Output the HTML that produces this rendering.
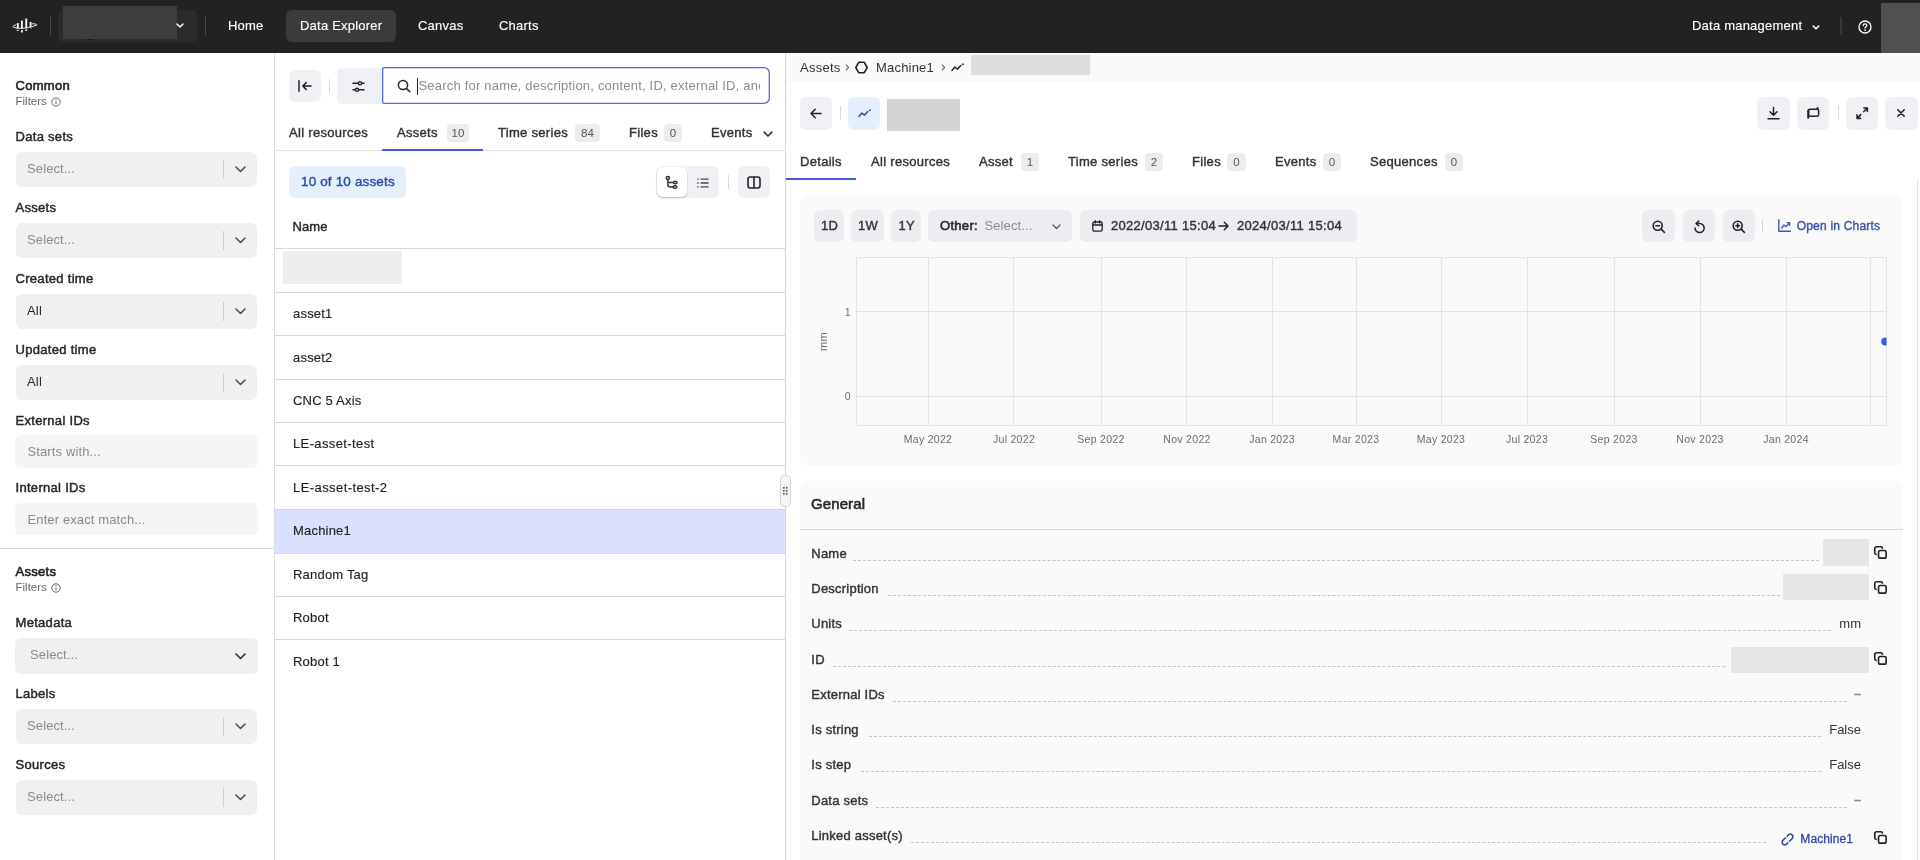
<!DOCTYPE html>
<html lang="en">
<head>
<meta charset="utf-8">
<title>Data Explorer</title>
<style>
*{box-sizing:border-box;margin:0;padding:0}
html,body{width:1920px;height:860px;overflow:hidden;background:#fff}
body{will-change:transform}
body{font-family:"Liberation Sans",Arial,sans-serif;color:#222;font-size:14px;position:relative;-webkit-font-smoothing:antialiased}
.abs{position:absolute}
.t{position:absolute;white-space:nowrap;line-height:20px;height:20px}
svg{position:absolute;overflow:visible}
/* NAV */
#nav{position:absolute;left:0;top:0;width:1920px;height:53px;background:#222}
#nav .t{color:#fff;font-size:13px;font-weight:400;-webkit-text-stroke:.15px #fff;top:16px;letter-spacing:.22px}
.vdiv{position:absolute;width:1px;background:#4a4a4a}
/* SIDEBAR */
#side{position:absolute;left:0;top:53px;width:275px;height:807px;background:#fff;border-right:1px solid #dcdcdc}
.lbl{position:absolute;left:15.5px;font-size:13px;font-weight:400;-webkit-text-stroke:.45px #262626;color:#262626;white-space:nowrap;line-height:20px;height:20px;letter-spacing:.3px}
.sub{position:absolute;left:15.5px;font-size:11.5px;color:#666;white-space:nowrap;line-height:16px;height:16px}
.sel{position:absolute;left:16px;width:241px;height:35px;background:#f0f0f0;border-radius:6px}
.sel .ph{position:absolute;left:11px;top:7px;font-size:13px;color:#8a8a8a;line-height:20px;letter-spacing:.12px}
.sel .val{position:absolute;left:11px;top:7px;font-size:13px;color:#262626;line-height:20px;letter-spacing:.2px}
.sel .dv{position:absolute;left:207px;top:8px;width:1px;height:19px;background:#cfcfcf}
.inp{position:absolute;left:15px;width:243px;height:33px;background:#f5f5f5;border-radius:6px}
.inp .ph{position:absolute;left:12.5px;top:7px;font-size:13px;color:#8a8a8a;line-height:20px;letter-spacing:.12px}
/* MID */
#mid{position:absolute;left:275px;top:53px;width:511px;height:807px;background:#fff;border-right:1px solid #d2d2d6}
.btn{position:absolute;background:#f0f1f5;border-radius:6px}
.tab{position:absolute;font-size:13px;font-weight:400;-webkit-text-stroke:.4px #333;color:#333;white-space:nowrap;line-height:20px;height:20px;letter-spacing:.3px}
.badge{position:absolute;height:18px;background:#ececec;border-radius:4px;font-size:11.5px;color:#555;text-align:center;line-height:18px;margin-top:1px}
.row{position:absolute;left:0;width:510px;border-top:1px solid #d9d9d9}
.row span{position:absolute;left:18px;font-size:13px;color:#1f1f1f;-webkit-text-stroke:.15px #1f1f1f;line-height:20px;white-space:nowrap;letter-spacing:.2px}
/* RIGHT */
#right{position:absolute;left:786px;top:53px;width:1134px;height:807px;background:#fff}
.card{position:absolute;left:14px;width:1103px;background:#fafafa;border-radius:8px}
.gbtn{position:absolute;background:#ededf1;border-radius:6px;height:32px;top:15px}
.gbtn .t{font-size:13px;font-weight:400;-webkit-text-stroke:.4px #333;color:#333;top:5.5px;letter-spacing:.3px}
.kv{position:absolute;left:11px;width:1080px;height:20px;margin-top:1px}
.kv .k{position:absolute;left:.3px;top:0;font-size:13px;font-weight:400;-webkit-text-stroke:.4px #333;color:#333;line-height:20px;white-space:nowrap;letter-spacing:.22px}
.kv .d{position:absolute;top:16px;height:0;border-top:1px dashed #c4c4c4}
.kv .v{position:absolute;right:30px;top:0;font-size:13px;color:#333;line-height:20px;white-space:nowrap;letter-spacing:0}
.red{position:absolute;background:#e6e6e6}
.ax{font-family:"Liberation Sans",Arial,sans-serif;font-size:10.5px;fill:#6b6b6b;letter-spacing:.3px}
</style>
</head>
<body>

<!-- ================= NAV ================= -->
<div id="nav">
  <svg style="left:0;top:0" width="50" height="53" viewBox="0 0 50 53" fill="none">
    <path d="M17.8 23.1v7.8M21.9 20.600v11.900M26.250 18.400v12.500M30.600 21.900v7.100" stroke="#f4f4f4" stroke-width="1.900"/>
    <path d="M12.900 28C15 29.800 26 30.800 36.800 26.200" stroke="#222" stroke-width="1.300"/>
    <path d="M15.800 24.900C13.800 25.400 12.600 26 12.900 26.800C15 28.600 26 29.600 36.800 25C37.200 24.300 35 23.700 32.400 23.800" stroke="#ededed" stroke-width="1" stroke-linecap="round"/>
  </svg>
  <div class="vdiv" style="left:50px;top:17px;height:18px"></div>
  <div class="abs" style="left:58px;top:10px;width:140px;height:32px;background:#2b2b2b;border-radius:6px"></div>
  <div class="abs" style="left:63px;top:6px;width:114px;height:33px;background:#3d3d3d"></div><div class="abs" style="left:87px;top:39px;width:7px;height:1px;background:#181818"></div>
  <svg style="left:176px;top:23px" width="8" height="6" viewBox="0 0 8 6" fill="none" stroke="#fff" stroke-width="1.5" stroke-linecap="round" stroke-linejoin="round"><path d="M1 1l3 3 3-3"/></svg>
  <div class="vdiv" style="left:205px;top:17px;height:18px"></div>
  <div class="t" style="left:228px">Home</div>
  <div class="abs" style="left:286px;top:10px;width:110px;height:32px;background:#3b3b3b;border-radius:6px"></div>
  <div class="t" style="left:300px">Data Explorer</div>
  <div class="t" style="left:418px">Canvas</div>
  <div class="t" style="left:499px">Charts</div>
  <div class="t" style="left:1692px">Data management</div>
  <svg style="left:1812px;top:24.8px" width="8" height="6" viewBox="0 0 8 6" fill="none" stroke="#fff" stroke-width="1.6" stroke-linecap="round" stroke-linejoin="round"><path d="M1.200 1l2.800 2.800L6.800 1"/></svg>
  <div class="vdiv" style="left:1840px;top:17px;height:18px;width:2px;background:#383838"></div>
  <svg style="left:1857.700px;top:19.600px" width="14" height="14" viewBox="0 0 14 14" fill="none" stroke="#fff" stroke-width="1.3" stroke-linecap="round"><circle cx="7" cy="7" r="6"/><path d="M5.2 5.6c0-1 .8-1.7 1.8-1.7s1.8.7 1.8 1.6c0 1.3-1.8 1.4-1.8 2.7"/><circle cx="7" cy="10.2" r=".5" fill="#fff" stroke-width=".6"/></svg>
  <div class="abs" style="left:1881px;top:3px;width:39px;height:50px;background:#515051"></div>
</div>

<!-- ================= SIDEBAR ================= -->
<div id="side">
  <div class="lbl" style="top:22.5px;-webkit-text-stroke:.6px #1f1f1f;color:#1f1f1f">Common</div>
  <div class="sub" style="top:40px">Filters</div>
  <svg style="left:51px;top:44px" width="10" height="10" viewBox="0 0 10 10" fill="none" stroke="#666" stroke-width="1"><circle cx="5" cy="5" r="4.2"/><path d="M5 4.800v2.500" stroke-linecap="butt" stroke-width="1.200"/><circle cx="5" cy="2.900" r=".7" fill="#555" stroke="none"/></svg>

  <div class="lbl" style="top:74px">Data sets</div>
  <div class="sel" style="top:99px"><span class="ph">Select...</span><i class="dv"></i><svg style="left:219px;top:14px" width="11" height="7" viewBox="0 0 11 7" fill="none" stroke="#505050" stroke-width="1.6" stroke-linecap="round" stroke-linejoin="round"><path d="M1 1l4.5 4.5L10 1"/></svg></div>

  <div class="lbl" style="top:145px">Assets</div>
  <div class="sel" style="top:170px"><span class="ph">Select...</span><i class="dv"></i><svg style="left:219px;top:14px" width="11" height="7" viewBox="0 0 11 7" fill="none" stroke="#505050" stroke-width="1.6" stroke-linecap="round" stroke-linejoin="round"><path d="M1 1l4.5 4.5L10 1"/></svg></div>

  <div class="lbl" style="top:216px">Created time</div>
  <div class="sel" style="top:241px"><span class="val">All</span><i class="dv"></i><svg style="left:219px;top:14px" width="11" height="7" viewBox="0 0 11 7" fill="none" stroke="#505050" stroke-width="1.6" stroke-linecap="round" stroke-linejoin="round"><path d="M1 1l4.5 4.5L10 1"/></svg></div>

  <div class="lbl" style="top:287px">Updated time</div>
  <div class="sel" style="top:312px"><span class="val">All</span><i class="dv"></i><svg style="left:219px;top:14px" width="11" height="7" viewBox="0 0 11 7" fill="none" stroke="#505050" stroke-width="1.6" stroke-linecap="round" stroke-linejoin="round"><path d="M1 1l4.5 4.5L10 1"/></svg></div>

  <div class="lbl" style="top:358px">External IDs</div>
  <div class="inp" style="top:382px"><span class="ph">Starts with...</span></div>

  <div class="lbl" style="top:425px">Internal IDs</div>
  <div class="inp" style="top:450px;height:32px"><span class="ph">Enter exact match...</span></div>

  <div class="abs" style="left:0;top:495px;width:274px;height:1px;background:#d9d9d9"></div>

  <div class="lbl" style="top:509px;-webkit-text-stroke:.6px #1f1f1f;color:#1f1f1f">Assets</div>
  <div class="sub" style="top:526px">Filters</div>
  <svg style="left:51px;top:530px" width="10" height="10" viewBox="0 0 10 10" fill="none" stroke="#666" stroke-width="1"><circle cx="5" cy="5" r="4.2"/><path d="M5 4.800v2.500" stroke-linecap="butt" stroke-width="1.200"/><circle cx="5" cy="2.900" r=".7" fill="#555" stroke="none"/></svg>

  <div class="lbl" style="top:560px">Metadata</div>
  <div class="inp" style="top:585px;height:36px;background:#f0f0f0"><span class="ph" style="left:15px;top:7px">Select...</span><svg style="left:220px;top:15px" width="11" height="7" viewBox="0 0 11 7" fill="none" stroke="#333" stroke-width="1.7" stroke-linecap="round" stroke-linejoin="round"><path d="M1 1l4.5 4.5L10 1"/></svg></div>

  <div class="lbl" style="top:631px">Labels</div>
  <div class="sel" style="top:656px"><span class="ph">Select...</span><i class="dv"></i><svg style="left:219px;top:14px" width="11" height="7" viewBox="0 0 11 7" fill="none" stroke="#505050" stroke-width="1.6" stroke-linecap="round" stroke-linejoin="round"><path d="M1 1l4.5 4.5L10 1"/></svg></div>

  <div class="lbl" style="top:702px">Sources</div>
  <div class="sel" style="top:727px"><span class="ph">Select...</span><i class="dv"></i><svg style="left:219px;top:14px" width="11" height="7" viewBox="0 0 11 7" fill="none" stroke="#505050" stroke-width="1.6" stroke-linecap="round" stroke-linejoin="round"><path d="M1 1l4.5 4.5L10 1"/></svg></div>
</div>

<!-- ================= MIDDLE ================= -->
<div id="mid">
  <!-- toolbar -->
  <div class="btn" style="left:14px;top:17px;width:32px;height:32px"></div>
  <svg style="left:23px;top:27px" width="14" height="12" viewBox="0 0 14 12" fill="none" stroke="#222" stroke-width="1.5" stroke-linecap="round" stroke-linejoin="round"><path d="M1 .8v10.4M13 6H5M8.2 2.6L4.8 6l3.4 3.4"/></svg>
  <div class="abs" style="left:54px;top:26px;width:1px;height:14px;background:#d9d9d9"></div>
  <div class="btn" style="left:62px;top:15px;width:50px;height:36px;border-radius:6px 0 0 6px"></div>
  <svg style="left:77px;top:27px" width="13" height="13" viewBox="0 0 13 13" fill="none" stroke="#222" stroke-width="1.4" stroke-linecap="round"><path d="M1 3.2h5.2M9.8 3.2H12M1 9.8h2.2M6.8 9.8H12"/><circle cx="8" cy="3.2" r="1.6"/><circle cx="5" cy="9.8" r="1.6"/></svg>
  <div class="abs" style="left:107px;top:14px;width:388px;height:37px;box-shadow:inset 0 0 0 1.3px #5568d6;border-radius:2px 6px 6px 2px;background:#fff"></div>
  <svg style="left:122px;top:26px" width="14" height="14" viewBox="0 0 14 14" fill="none" stroke="#222" stroke-width="1.5" stroke-linecap="round"><circle cx="6" cy="6" r="4.6"/><path d="M9.6 9.6L12.8 12.8"/></svg>
  <div class="abs" style="left:142px;top:25px;width:1px;height:17px;background:#222"></div>
  <div class="abs" style="left:143.5px;top:23px;width:341px;height:20px;overflow:hidden;white-space:nowrap;font-size:13px;line-height:20px;color:#8c8c8c;letter-spacing:.2px">Search for name, description, content, ID, external ID, and metadata</div>

  <!-- tabs -->
  <div class="tab" style="left:14px;top:70px">All resources</div>
  <div class="tab" style="left:122px;top:70px">Assets</div>
  <div class="badge" style="left:172px;top:70px;width:22px">10</div>
  <div class="tab" style="left:223px;top:70px">Time series</div>
  <div class="badge" style="left:300px;top:70px;width:25px">84</div>
  <div class="tab" style="left:354px;top:70px">Files</div>
  <div class="badge" style="left:389px;top:70px;width:18px">0</div>
  <div class="tab" style="left:436px;top:70px">Events</div>
  <svg style="left:488px;top:78px" width="10" height="7" viewBox="0 0 10 7" fill="none" stroke="#222" stroke-width="1.6" stroke-linecap="round" stroke-linejoin="round"><path d="M1 1l4 4 4-4"/></svg>
  <div class="abs" style="left:0;top:97px;width:510px;height:1px;background:#e0e0e0"></div>
  <div class="abs" style="left:107px;top:96px;width:101px;height:2px;background:#4060e0"></div>

  <!-- chip + view toggles -->
  <div class="abs" style="left:14px;top:113px;width:117px;height:32px;background:#e6effc;border-radius:6px"></div>
  <div class="t" style="left:26px;top:119px;font-size:13.5px;font-weight:400;-webkit-text-stroke:.4px #2c4ba8;color:#2c4ba8;letter-spacing:.15px">10 of 10 assets</div>
  <div class="btn" style="left:381px;top:113px;width:63px;height:32px"></div>
  <div class="abs" style="left:382px;top:114px;width:30px;height:30px;background:#fff;border-radius:6px;box-shadow:0 1px 2px rgba(0,0,0,.25)"></div>
  <svg style="left:390px;top:122px" width="14" height="14" viewBox="0 0 14 14" fill="none" stroke="#333" stroke-width="1.5" stroke-linecap="round" stroke-linejoin="round"><ellipse cx="2.9" cy="2.9" rx="1.7" ry="1.4"/><ellipse cx="10.2" cy="7.5" rx="1.8" ry="1.3"/><ellipse cx="10" cy="12.1" rx="1.8" ry="1.3"/><path d="M2.9 4.400v5.200c0 1.600.8 2.500 2.400 2.500h2.700M2.900 7.500h5.300"/></svg>
  <svg style="left:421.5px;top:124.6px" width="12" height="10" viewBox="0 0 12 10" fill="none" stroke="#444" stroke-width="1.3" stroke-linecap="butt"><path d="M.2 1.2h1.4M3.6 1.2h8M.2 5h1.4M3.6 5h8M.2 8.8h1.4M3.6 8.8h8"/></svg>
  <div class="abs" style="left:453px;top:122px;width:1px;height:14px;background:#d9d9d9"></div>
  <div class="btn" style="left:463px;top:113px;width:32px;height:32px"></div>
  <svg style="left:472px;top:123px" width="14" height="13" viewBox="0 0 14 13" fill="none" stroke="#222" stroke-width="1.6" stroke-linejoin="round"><rect x="1" y="1" width="12" height="11" rx="2.2"/><path d="M7 1v11"/></svg>

  <!-- table -->
  <div class="t" style="left:17.5px;top:163.5px;font-size:13px;font-weight:400;-webkit-text-stroke:.4px #262626;color:#262626;letter-spacing:.1px">Name</div>
  <div class="row" style="top:195px;height:44px"><div class="red" style="left:8px;top:2px;width:119px;height:33px;background:#eee"></div></div>
  <div class="row" style="top:239px;height:43px"><span style="top:11px">asset1</span></div>
  <div class="row" style="top:282px;height:44px"><span style="top:12px">asset2</span></div>
  <div class="row" style="top:326px;height:43px"><span style="top:11px">CNC 5 Axis</span></div>
  <div class="row" style="top:369px;height:43px"><span style="top:11px;letter-spacing:.38px">LE-asset-test</span></div>
  <div class="row" style="top:412px;height:44px"><span style="top:12px;letter-spacing:.42px">LE-asset-test-2</span></div>
  <div class="row" style="top:456px;height:44px;background:#dbe1fc;border-top-color:#cfd5f3"><span style="top:11px">Machine1</span></div>
  <div class="row" style="top:500px;height:43px"><span style="top:11px">Random Tag</span></div>
  <div class="row" style="top:543px;height:44px"><span style="top:11px">Robot</span></div>
  <div class="row" style="top:586px;height:44px"><span style="top:12px">Robot 1</span></div>
</div>

<!-- resize handle -->
<div class="abs" style="left:780px;top:475px;width:11px;height:32px;background:#f5f5f5;border:1px solid #d6d6d6;border-radius:4px;z-index:5"></div>
<svg style="left:783px;top:487px;z-index:6" width="5" height="8" viewBox="0 0 5 8" fill="#555"><rect x="0" y="0" width="1.6" height="1.6"/><rect x="3" y="0" width="1.6" height="1.6"/><rect x="0" y="3" width="1.6" height="1.6"/><rect x="3" y="3" width="1.6" height="1.6"/><rect x="0" y="6" width="1.6" height="1.6"/><rect x="3" y="6" width="1.6" height="1.6"/></svg>

<!-- ================= RIGHT ================= -->
<div id="right">
  <!-- breadcrumb -->
  <div class="abs" style="left:0;top:0;width:1134px;height:29px;background:#fafafa"></div>
  <div class="t" style="left:14px;top:5px;font-size:13px;color:#333;letter-spacing:.25px">Assets</div>
  <svg style="left:60.400px;top:12px" width="3" height="5" viewBox="0 0 3 5" fill="none" stroke="#444" stroke-width="1.100" stroke-linecap="round" stroke-linejoin="round"><path d="M.3 0l2.300 2.500-2.300 2.500"/></svg>
  <svg style="left:69.2px;top:7.7px" width="13" height="13" viewBox="0 0 13 13" fill="none" stroke="#222" stroke-width="1.6" stroke-linejoin="round"><path d="M3.7 1.3h5.6l2.9 5.2-2.9 5.2H3.700L.8 6.500z"/></svg>
  <div class="t" style="left:90px;top:5px;font-size:13px;color:#333;letter-spacing:.2px">Machine1</div>
  <svg style="left:156px;top:12px" width="3" height="5" viewBox="0 0 3 5" fill="none" stroke="#444" stroke-width="1.100" stroke-linecap="round" stroke-linejoin="round"><path d="M.3 0l2.300 2.500-2.300 2.500"/></svg>
  <svg style="left:165px;top:10px" width="13" height="9" viewBox="0 0 13 9" fill="none" stroke="#222" stroke-width="1.5" stroke-linecap="round" stroke-linejoin="round"><path d="M1 7.5l2.8-3.4 2.8 2L9.8 2.5"/><circle cx="11.8" cy="1.2" r=".5" fill="#222" stroke-width=".8"/></svg>
  <div class="red" style="left:185px;top:2px;width:119px;height:20px;background:#ddd"></div>

  <!-- header -->
  <div class="btn" style="left:14px;top:44px;width:32px;height:33px"></div>
  <svg style="left:24px;top:55px" width="12" height="11" viewBox="0 0 12 11" fill="none" stroke="#222" stroke-width="1.5" stroke-linecap="round" stroke-linejoin="round"><path d="M11 5.5H1.2M5.2 1.2L1 5.5l4.2 4.3"/></svg>
  <div class="abs" style="left:54px;top:53px;width:1px;height:14px;background:#d9d9d9"></div>
  <div class="btn" style="left:62px;top:44px;width:32px;height:33px;background:#e6effc"></div>
  <svg style="left:72px;top:56px" width="13" height="9" viewBox="0 0 13 9" fill="none" stroke="#2f50b0" stroke-width="1.5" stroke-linecap="round" stroke-linejoin="round"><path d="M1 7.5l2.8-3.4 2.8 2L9.8 2.5"/><circle cx="11.8" cy="1.2" r=".5" fill="#2f50b0" stroke-width=".8"/></svg>
  <div class="red" style="left:101px;top:46px;width:73px;height:32px;background:#d4d4d4"></div>

  <div class="btn" style="left:971px;top:44px;width:33px;height:33px"></div>
  <svg style="left:981px;top:53px" width="13" height="14" viewBox="0 0 13 14" fill="none" stroke="#222" stroke-width="1.5" stroke-linecap="round" stroke-linejoin="round"><path d="M6.5 1.600V9M3 5.800l3.500 3.400L10 5.800M1 12.800h11"/></svg>
  <div class="btn" style="left:1011px;top:44px;width:32px;height:33px"></div>
  <svg style="left:1020px;top:54px" width="14" height="12" viewBox="0 0 14 12" fill="none" stroke="#222" stroke-width="1.5" stroke-linejoin="round"><rect x="2.6" y="2.2" width="10" height="7" rx="1.4"/><path d="M2.200 3.400v7.400" stroke-linecap="round" stroke-width="2"/><path d="M11.600 .800v1.400" stroke-linecap="round" stroke-width="1.800"/></svg>
  <div class="abs" style="left:1052px;top:53px;width:1px;height:14px;background:#d9d9d9"></div>
  <div class="btn" style="left:1060px;top:44px;width:32px;height:33px"></div>
  <svg style="left:1069.6px;top:54px" width="12.4" height="12.4" viewBox="0 0 12 12" fill="none" stroke="#222" stroke-width="1.5" stroke-linecap="round" stroke-linejoin="round"><path d="M7.6 1H11v3.400M11 1L7.400 4.600M4.400 11H1V7.600M1 11l3.600-3.600"/></svg>
  <div class="btn" style="left:1099px;top:44px;width:33px;height:33px"></div>
  <svg style="left:1111px;top:56px" width="8" height="8" viewBox="0 0 8 8" fill="none" stroke="#222" stroke-width="1.6" stroke-linecap="round"><path d="M.8.8l6.4 6.4M7.2.8L.8 7.2"/></svg>

  <!-- tabs -->
  <div class="tab" style="left:14px;top:99px">Details</div>
  <div class="tab" style="left:85px;top:99px">All resources</div>
  <div class="tab" style="left:193px;top:99px">Asset</div>
  <div class="badge" style="left:235px;top:99px;width:18px">1</div>
  <div class="tab" style="left:282px;top:99px">Time series</div>
  <div class="badge" style="left:359px;top:99px;width:18px">2</div>
  <div class="tab" style="left:406px;top:99px">Files</div>
  <div class="badge" style="left:441px;top:99px;width:19px">0</div>
  <div class="tab" style="left:489px;top:99px">Events</div>
  <div class="badge" style="left:537px;top:99px;width:18px">0</div>
  <div class="tab" style="left:584px;top:99px">Sequences</div>
  <div class="badge" style="left:659px;top:99px;width:18px">0</div>
  <div class="abs" style="left:0;top:125px;width:70px;height:2px;background:#4060e0"></div>

  <!-- chart card -->
  <div class="card" style="top:142px;height:271px">
    <div class="gbtn" style="left:14px;width:30px"><div class="t" style="left:7px">1D</div></div>
    <div class="gbtn" style="left:51px;width:33px"><div class="t" style="left:7px">1W</div></div>
    <div class="gbtn" style="left:91px;width:30px"><div class="t" style="left:7.5px">1Y</div></div>
    <div class="gbtn" style="left:128px;width:144px">
      <div class="t" style="left:12px;-webkit-text-stroke:.6px #2a2a2a;color:#2a2a2a">Other:</div>
      <div class="t" style="left:56.5px;font-weight:400;-webkit-text-stroke:0;color:#8c8c8c;letter-spacing:.1px">Select...</div>
      <svg style="left:124px;top:14px" width="9" height="6" viewBox="0 0 9 6" fill="none" stroke="#555" stroke-width="1.3" stroke-linecap="round" stroke-linejoin="round"><path d="M1 1l3.5 3.5L8 1"/></svg>
    </div>
    <div class="gbtn" style="left:280px;width:277px">
      <svg style="left:12px;top:10px" width="11" height="12" viewBox="0 0 11 12" fill="none" stroke="#222" stroke-width="1.3" stroke-linejoin="round"><rect x=".8" y="2" width="9.4" height="9.2" rx="1.6"/><path d="M.8 5h9.4M3.3.6v2.4M7.7.6v2.4" stroke-linecap="round"/></svg>
      <div class="t" style="left:31px;letter-spacing:.3px">2022/03/11 15:04</div>
      <svg style="left:138px;top:11px" width="11" height="10" viewBox="0 0 11 10" fill="none" stroke="#222" stroke-width="1.5" stroke-linecap="round" stroke-linejoin="round"><path d="M1 5h9M6.3 1.2L10 5 6.3 8.8"/></svg>
      <div class="t" style="left:157px;letter-spacing:.3px">2024/03/11 15:04</div>
    </div>
    <div class="gbtn" style="left:842px;width:33px"></div>
    <svg style="left:852px;top:25px" width="14" height="14" viewBox="0 0 14 14" fill="none" stroke="#222" stroke-width="1.6" stroke-linecap="round"><circle cx="5.700" cy="5.700" r="4.500"/><path d="M9.100 9.100l3.300 3.300M3.900 5.700h3.600"/></svg>
    <div class="gbtn" style="left:883px;width:32px"></div>
    <svg style="left:892.5px;top:24.5px" width="13" height="14" viewBox="0 0 14 15" fill="none" stroke="#222" stroke-width="1.700" stroke-linecap="round" stroke-linejoin="round"><path d="M2.200 8.600a4.900 4.900 0 1 0 4.900-4.900H3.600"/><path d="M6 1.200L3.400 3.700 6 6.200"/></svg>
    <div class="gbtn" style="left:923px;width:32px"></div>
    <svg style="left:932px;top:25px" width="14" height="14" viewBox="0 0 14 14" fill="none" stroke="#222" stroke-width="1.6" stroke-linecap="round"><circle cx="5.700" cy="5.700" r="4.500"/><path d="M9.100 9.100l3.300 3.300M3.900 5.700h3.600M5.700 3.900v3.600"/></svg>
    <div class="abs" style="left:962px;top:24px;width:1px;height:14px;background:#d5d5d5"></div>
    <svg style="left:978px;top:24px" width="13" height="13" viewBox="0 0 13 13" fill="none" stroke="#3d56b8" stroke-width="1.4" stroke-linecap="round" stroke-linejoin="round"><path d="M.8.8v11.4h11.6"/><path d="M3.4 9l2.6-3 2 1.6 3.4-3.8M9 3.6h2.6v2.6"/></svg>
    <div class="t" style="left:996.7px;top:20.7px;font-size:12px;font-weight:400;-webkit-text-stroke:.4px #3d55ae;color:#3d55ae;letter-spacing:.2px">Open in Charts</div>

    <svg style="left:0;top:0" width="1102" height="270" viewBox="0 0 1102 270">
      <g fill="none" stroke="#e3e3e3" stroke-width="1">
        <rect x="56.5" y="62.5" width="1030" height="168"/>
        <path d="M128.500 62v169M213.500 62v169M301.500 62v169M386.500 62v169M472.500 62v169M556.500 62v169M641.500 62v169M727.500 62v169M814.500 62v169M900.500 62v169M986.500 62v169M1070.500 62v169"/>
        <path d="M57 116.500h1030M57 201.500h1030"/>
      </g>
      <clipPath id="cp"><rect x="1070" y="130" width="16.5" height="40"/></clipPath><circle cx="1085.3" cy="146.500" r="4.100" fill="#3b5bf0" clip-path="url(#cp)"/>
      <g class="ax" text-anchor="end"><text x="51" y="120.500">1</text><text x="51" y="205">0</text></g>
      <text class="ax" transform="translate(26.500 146.500) rotate(-90)" text-anchor="middle" style="font-size:11px">mm</text>
      <g class="ax" text-anchor="middle">
        <text x="128" y="247.800">May 2022</text><text x="214" y="247.800">Jul 2022</text><text x="301" y="247.800">Sep 2022</text><text x="387" y="247.800">Nov 2022</text><text x="472" y="247.800">Jan 2023</text><text x="556" y="247.800">Mar 2023</text><text x="641" y="247.800">May 2023</text><text x="727" y="247.800">Jul 2023</text><text x="814" y="247.800">Sep 2023</text><text x="900" y="247.800">Nov 2023</text><text x="986" y="247.800">Jan 2024</text>
      </g>
    </svg>
  </div>

  <!-- general card -->
  <div class="card" style="top:428px;height:400px">
    <div class="t" style="left:11px;top:13px;font-size:15px;font-weight:400;-webkit-text-stroke:.55px #262626;color:#262626;letter-spacing:.1px">General</div>
    <div class="abs" style="left:0;top:48px;width:1103px;height:1px;background:#d8d8d8"></div>

    <div class="kv" style="top:62px"><span class="k">Name</span><i class="d" style="left:42px;width:966px"></i></div>
    <div class="red" style="left:1023px;top:58px;width:46px;height:27px"></div>
    <div class="kv" style="top:97px"><span class="k">Description</span><i class="d" style="left:77px;width:892px"></i></div>
    <div class="red" style="left:983px;top:93px;width:86px;height:26px"></div>
    <div class="kv" style="top:132px"><span class="k">Units</span><i class="d" style="left:38px;width:982px"></i><span class="v">mm</span></div>
    <div class="kv" style="top:168px"><span class="k">ID</span><i class="d" style="left:22px;width:892px"></i></div>
    <div class="red" style="left:931px;top:166px;width:138px;height:26px"></div>
    <div class="kv" style="top:203px"><span class="k">External IDs</span><i class="d" style="left:82px;width:954px"></i><span class="v" style="color:#8a8a8a;-webkit-text-stroke:.6px #8a8a8a;font-size:11px;right:30.5px;top:-2px">–</span></div>
    <div class="kv" style="top:238px"><span class="k">Is string</span><i class="d" style="left:58px;width:952px"></i><span class="v">False</span></div>
    <div class="kv" style="top:273px"><span class="k">Is step</span><i class="d" style="left:50px;width:960px"></i><span class="v">False</span></div>
    <div class="kv" style="top:309px"><span class="k">Data sets</span><i class="d" style="left:65px;width:971px"></i><span class="v" style="color:#8a8a8a;-webkit-text-stroke:.6px #8a8a8a;font-size:11px;right:30.5px;top:-2px">–</span></div>
    <div class="kv" style="top:344px"><span class="k">Linked asset(s)</span><i class="d" style="left:100px;width:855px"></i></div>
    <svg style="left:981px;top:351.5px" width="13" height="13" viewBox="0 0 13 13" fill="none" stroke="#3049a8" stroke-width="1.5" stroke-linecap="round"><path d="M8.500 8.200l2.600-2.600a2.600 2.600 0 0 0-3.700-3.700l-1.200 1.200"/><path d="M4.500 4.800L1.900 7.400a2.600 2.600 0 0 0 3.700 3.700l1.200-1.200"/></svg>
    <div class="t" style="left:1000.3px;top:348px;font-size:12px;font-weight:400;-webkit-text-stroke:.3px #3049a8;color:#3049a8;letter-spacing:.1px">Machine1</div>

    <!-- copy icons -->
    <svg class="cp" style="left:1073.5px;top:64.5px" width="13" height="13" viewBox="0 0 12 12" fill="none" stroke="#222" stroke-width="1.5" stroke-linejoin="round"><rect x="4.200" y="4.200" width="7" height="7" rx="1.6"/><path d="M2.600 7.800H2.200A1.500 1.500 0 0 1 .7 6.300V2.200A1.500 1.500 0 0 1 2.200.7h4.100a1.500 1.500 0 0 1 1.500 1.500v.4"/></svg>
    <svg class="cp" style="left:1073.5px;top:99.5px" width="13" height="13" viewBox="0 0 12 12" fill="none" stroke="#222" stroke-width="1.5" stroke-linejoin="round"><rect x="4.200" y="4.200" width="7" height="7" rx="1.6"/><path d="M2.600 7.800H2.200A1.500 1.500 0 0 1 .7 6.300V2.200A1.500 1.500 0 0 1 2.200.7h4.100a1.500 1.500 0 0 1 1.500 1.500v.4"/></svg>
    <svg class="cp" style="left:1073.5px;top:170.5px" width="13" height="13" viewBox="0 0 12 12" fill="none" stroke="#222" stroke-width="1.5" stroke-linejoin="round"><rect x="4.200" y="4.200" width="7" height="7" rx="1.6"/><path d="M2.600 7.800H2.200A1.500 1.500 0 0 1 .7 6.300V2.200A1.500 1.500 0 0 1 2.200.7h4.100a1.500 1.500 0 0 1 1.500 1.500v.4"/></svg>
    <svg class="cp" style="left:1073.5px;top:349.5px" width="13" height="13" viewBox="0 0 12 12" fill="none" stroke="#222" stroke-width="1.5" stroke-linejoin="round"><rect x="4.200" y="4.200" width="7" height="7" rx="1.6"/><path d="M2.600 7.800H2.200A1.500 1.500 0 0 1 .7 6.300V2.200A1.500 1.500 0 0 1 2.200.7h4.100a1.500 1.500 0 0 1 1.500 1.500v.4"/></svg>
  </div>

  <!-- scrollbar-ish line -->
  <div class="abs" style="left:1131px;top:127px;width:3px;height:680px;background:#fafafa;border-left:1px solid #e2e2e2"></div>
</div>

</body>
</html>
